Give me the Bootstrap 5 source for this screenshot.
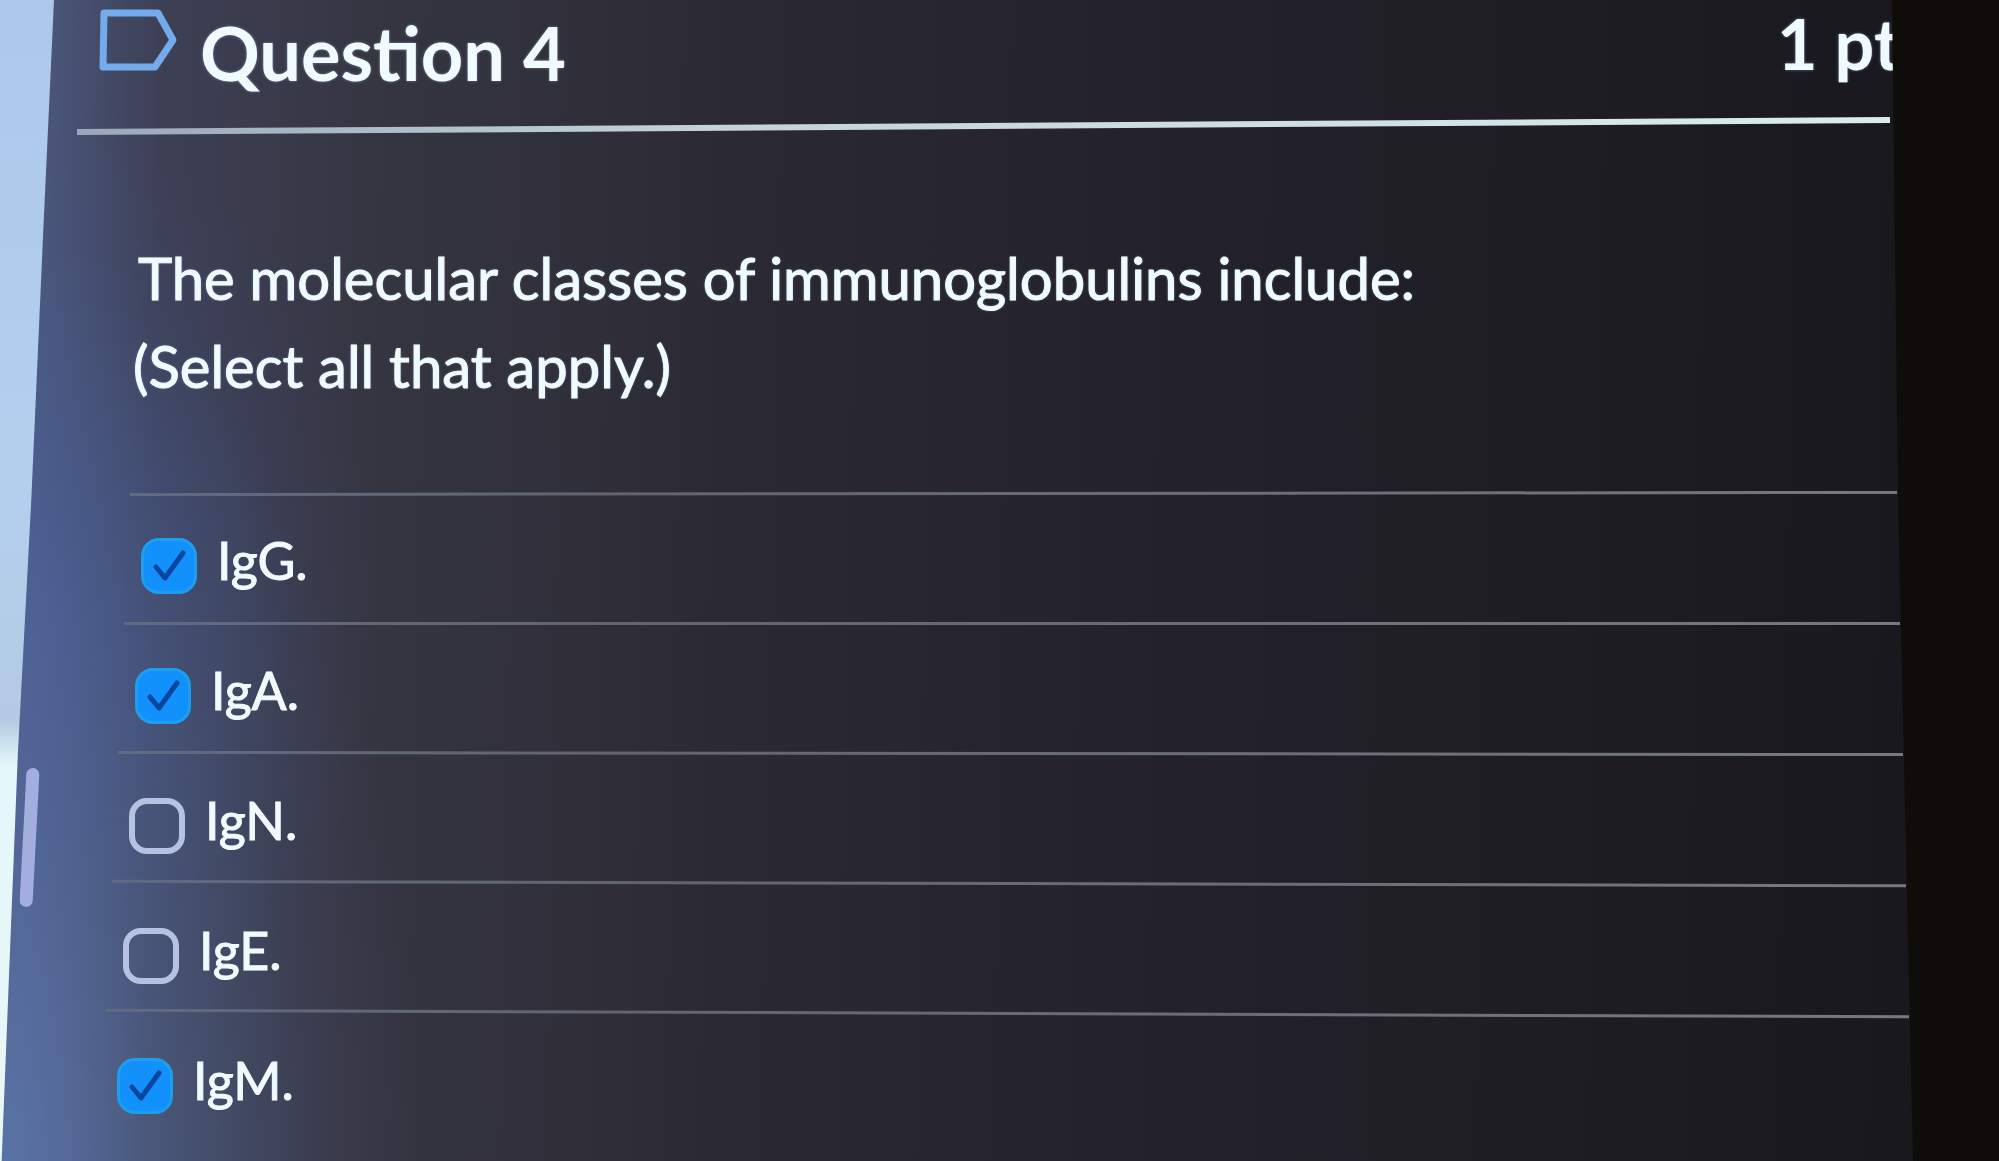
<!DOCTYPE html>
<html lang="en">
<head>
<meta charset="utf-8">
<meta name="viewport" content="width=device-width, initial-scale=1">
<title>Question 4</title>
<link href="https://cdn.jsdelivr.net/npm/bootstrap@5.3.0/dist/css/bootstrap.min.css" rel="stylesheet">
<style>
  body {
    min-height: 100vh;
    overflow: hidden;
    color: #f0fbff;
    font-family: Lato, "Open Sans", sans-serif;
    background: #0f0d0a;
  }
  .quiz-stage { min-height: 100vh; }
  /* dark screen, lit from the left */
  .quiz-screen {
    position: relative;
    min-height: 100vh;
    padding-right: 106px;
    background:
      radial-gradient(ellipse 420px 900px at 0 100%, rgba(94,124,180,.75), rgba(94,124,180,.35) 40%, rgba(94,124,180,.1) 72%, rgba(94,124,180,0)),
      radial-gradient(ellipse 340px 480px at 40px 52%, rgba(72,96,160,.5), rgba(72,96,160,.3) 40%, rgba(72,96,160,.08) 75%, rgba(72,96,160,0)),
      linear-gradient(91deg, #4b577c 2%, #3d4055 8%, #363643 18%, #2b2a34 36%, #23222a 58%, #1d1c23 82%, #19181f 95%);
  }
  .edge-left, .edge-right { position: absolute; top: 0; height: 100%; }
  .edge-left {
    left: 0; width: 54px;
    background: linear-gradient(#abc7ea, #b4d0ef 40%, #b3cbe2 62%, #e4f7fb 66%, #e9f8f6);
    clip-path: polygon(0 0, 100% 0, 80% 20%, 58% 43%, 33% 65%, 15% 86%, 3% 100%, 0 100%);
  }
  .edge-right {
    right: 0; width: 107px;
    background: #0f0d0a;
    clip-path: polygon(0 0, 100% 0, 100% 100%, 21px 100%, 6px 43%);
  }
  .drag-handle {
    position: absolute; left: 23px; top: 768px;
    width: 13px; height: 139px;
    border: 0; padding: 0; border-radius: 7px;
    background: #a3aede;
    transform: rotate(3deg);
  }
  .quiz-header { padding: 0 0 0 98px; height: 120px; }
  .flag-btn { padding: 8px 0 0; border: 0; background: none; line-height: 1; }
  .quiz-title { font-size: 74px; line-height: 88px; font-weight: 700; padding-top: 9px; margin-left: 22px; }
  .quiz-points { font-size: 70px; line-height: 80px; font-weight: 700; padding-top: 3px; width: 116px; overflow: hidden; white-space: nowrap; }
  .quiz-title, .quiz-points { text-shadow: 0 0 3px rgba(170,205,255,.5); }
  .header-rule {
    height: 6px; margin: 3px 3px 0 77px;
    background: linear-gradient(90deg, #9aa6ba, #c2d4d8 35%, #d9ecee);
    transform: rotate(-.38deg);
  }
  .quiz-prompt { padding: 105px 0 0 138px; font-size: 58px; line-height: 88px; height: 363px; }
  .quiz-prompt p { margin: 0; -webkit-text-stroke: 1px #f0fbff; text-shadow: 0 0 3px rgba(150,190,255,.5); }
  .quiz-prompt p + p { margin-left: -5px; }
  /* each answer starts a little further left than the one before it */
  .answer-row {
    position: relative;
    height: 130px;
    margin-left: calc(130px - var(--i) * 6px);
    padding: 18px 0 0 11px;
    gap: 20px;
  }
  .answer-row::before {
    content: ""; position: absolute; z-index: 1; left: 0; right: calc(-4px - var(--i) * 3px); top: 0; height: 3px;
    background: linear-gradient(90deg, #606a82, #61656d 30%, #757980);
    transform: rotate(calc((var(--i) - 1) * .07deg));
  }
  .answer-row label { font-size: 52px; line-height: 72px; padding-bottom: 13px; -webkit-text-stroke: 1px #f0fbff; }
  .answer-row .form-check-input {
    width: 56px; height: 56px; margin: 0; flex: none;
    border: 6px solid #b6c2e2; border-radius: 18px;
    background-color: transparent;
  }
  .answer-row .form-check-input:checked {
    border: 3px solid #1c9fee;
    background-color: #1290fb;
    background-image: url("data:image/svg+xml,%3Csvg xmlns='http://www.w3.org/2000/svg' viewBox='0 0 50 50'%3E%3Cpath d='M12 26l9 11L39 12' fill='none' stroke='%230a459f' stroke-width='5' stroke-linecap='round' stroke-linejoin='round'/%3E%3C/svg%3E");
    background-size: 100% 100%;
  }
</style>
</head>
<body>
<div class="quiz-stage">
  <main class="quiz-screen">
    <div class="edge-left"></div>
    <div class="edge-right"></div>
    <button type="button" class="drag-handle" aria-label="Resize panel"></button>

    <header class="quiz-header d-flex align-items-start">
      <button type="button" class="flag-btn" aria-label="Flag question">
        <svg class="d-block" width="80" height="64" viewBox="0 0 80 64" fill="none" stroke="#73abed" stroke-width="7" stroke-linejoin="round"><path d="M6 5H60L75 32L57 59H5Z"/></svg>
      </button>
      <h1 class="quiz-title mb-0">Question 4</h1>
      <div class="quiz-points ms-auto">1 pt</div>
    </header>
    <div class="header-rule"></div>

    <section class="quiz-prompt">
      <p>The molecular classes of immunoglobulins include:</p>
      <p>(Select all that apply.)</p>
    </section>

    <form>
      <div class="answer-row d-flex align-items-center" style="--i:0"><input class="form-check-input" type="checkbox" id="igg" checked><label for="igg">IgG.</label></div>
      <div class="answer-row d-flex align-items-center" style="--i:1"><input class="form-check-input" type="checkbox" id="iga" checked><label for="iga">IgA.</label></div>
      <div class="answer-row d-flex align-items-center" style="--i:2"><input class="form-check-input" type="checkbox" id="ign"><label for="ign">IgN.</label></div>
      <div class="answer-row d-flex align-items-center" style="--i:3"><input class="form-check-input" type="checkbox" id="ige"><label for="ige">IgE.</label></div>
      <div class="answer-row d-flex align-items-center" style="--i:4"><input class="form-check-input" type="checkbox" id="igm" checked><label for="igm">IgM.</label></div>
    </form>
  </main>
</div>
<script src="https://cdn.jsdelivr.net/npm/bootstrap@5.3.0/dist/js/bootstrap.bundle.min.js"></script>
</body>
</html>
